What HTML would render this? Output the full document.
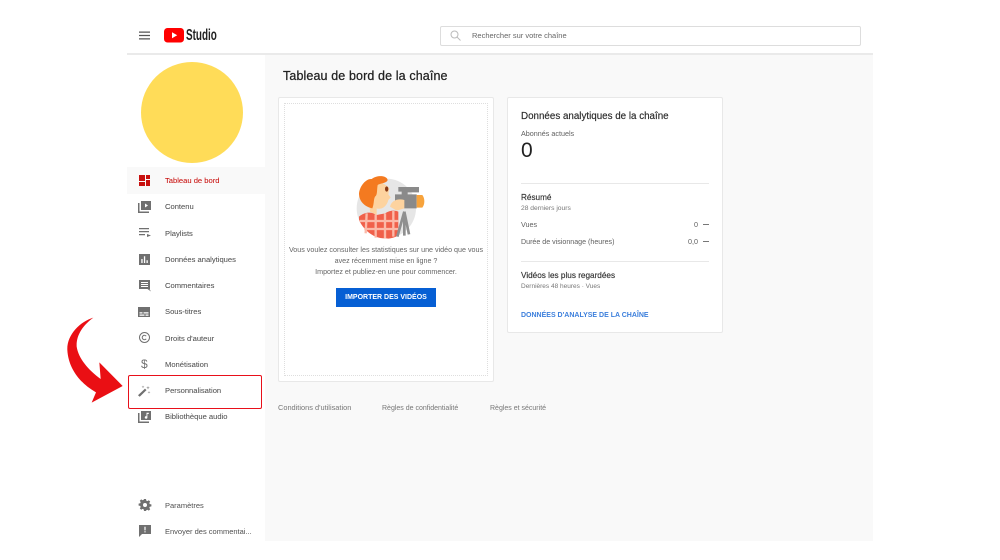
<!DOCTYPE html>
<html lang="fr">
<head>
<meta charset="utf-8">
<title>Studio</title>
<style>
html,body{margin:0;padding:0;background:#fff}
#p{position:relative;width:1000px;height:560px;overflow:hidden;background:#fff;font-family:"Liberation Sans",sans-serif;color:#333;filter:blur(.25px)}
#p div,#p span{position:absolute;white-space:nowrap}
#p svg{position:absolute;overflow:visible}
.n{left:165px;font-size:7.6px;line-height:10px;color:#505050;-webkit-text-stroke:.05px #505050}
.s{font-size:7.2px;line-height:10px;color:#606060}
.f{top:404px;font-size:7.2px;line-height:10px;color:#777}
.i{fill:#707070}
</style>
</head>
<body>
<div id="p">
<div style="left:265px;top:53px;width:608px;height:488px;background:#f9f9f9"></div>
<div style="left:127px;top:53px;width:746px;height:2px;background:#eaeaea"></div>
<svg style="left:139px;top:31px" width="11" height="9"><path d="M0 .5h11v1.200H0zM0 3.900h11v1.200H0zM0 7.300h11v1.200H0z" fill="#555"/></svg>
<svg style="left:164px;top:28px" width="20" height="15"><rect width="20" height="14.500" rx="3.500" fill="#f00"/><path d="M8 4.300l5.200 3-5.200 3z" fill="#fff"/></svg>
<div style="left:186px;top:27px;font-size:15.500px;line-height:18px;font-weight:bold;color:#222;transform:scaleX(.64);transform-origin:left">Studio</div>
<div style="left:440px;top:26px;width:419px;height:18px;border:1px solid #ddd;border-radius:2px;background:#fff"></div>
<svg style="left:450px;top:30px" width="11" height="11"><circle cx="4.500" cy="4.500" r="3.500" fill="none" stroke="#bbb"/><path d="M7 7l3.500 3.500" stroke="#bbb"/></svg>
<div style="left:472px;top:31px;font-size:7.500px;line-height:10px;color:#666">Rechercher sur votre chaîne</div>
<div style="left:141px;top:62px;width:102px;height:101px;border-radius:50%;background:#ffdc58"></div>
<div style="left:127px;top:167px;width:138px;height:27px;background:#f9f9f9"></div>
<svg style="left:139px;top:175px" width="11" height="11"><path d="M0 0h6v6H0zM7 0h4v4H7zM7 5h4v6H7zM0 7h6v4H0z" fill="#c8100e"/></svg>
<div class="n" style="top:175.500px;color:#c8100e;-webkit-text-stroke-color:#c8100e">Tableau de bord</div>
<svg style="left:138px;top:201px" width="13" height="12"><path class="i" d="M3 0h10v9H3zM0 2h1.500v8.500H11V12H0z"/><path d="M7 2.500l3 2-3 2z" fill="#fff"/></svg>
<div class="n" style="top:202px">Contenu</div>
<svg style="left:139px;top:228px" width="12" height="10"><path class="i" d="M0 0h10v1.300H0zM0 3h10v1.300H0zM0 6h6v1.300H0zM8 6l4 1.500-4 1.500z"/></svg>
<div class="n" style="top:229px">Playlists</div>
<svg style="left:139px;top:254px" width="11" height="11"><path class="i" d="M0 0h11v11H0z"/><path d="M2.300 5h1.300v4H2.300zM4.900 2.200h1.300V9H4.900zM7.500 6.300h1.300V9H7.500z" fill="#fff"/></svg>
<div class="n" style="top:255px">Données analytiques</div>
<svg style="left:139px;top:280px" width="12" height="12"><path class="i" d="M0 0h11v9h-.5l1.500 2.500L8.500 9H0z"/><path d="M2 2h7v1H2zM2 4h7v1H2zM2 6h7v1H2z" fill="#fff"/></svg>
<div class="n" style="top:281px">Commentaires</div>
<svg style="left:138px;top:307px" width="13" height="10"><path class="i" d="M0 0h12v10H0z"/><path d="M1.500 5.200h3v1.300h-3zM5.500 5.200h5v1.300h-5zM1.500 7.500h5v1.300h-5zM7.500 7.500h3v1.300h-3z" fill="#fff"/></svg>
<div class="n" style="top:307px">Sous-titres</div>
<svg style="left:139px;top:332px" width="12" height="12"><circle cx="5.500" cy="5.500" r="5" fill="none" stroke="#707070"/><path d="M7.200 4.200a2.200 2.200 0 1 0 0 2.600" fill="none" stroke="#707070"/></svg>
<div class="n" style="top:333.500px">Droits d'auteur</div>
<div style="left:141px;top:357px;font-size:12px;line-height:14px;color:#707070">$</div>
<div class="n" style="top:359.500px">Monétisation</div>
<svg style="left:138px;top:385px" width="13" height="12"><path class="i" d="M0 10.300L7 3.600l1.500 1.500-6.800 6.700z"/><path d="M10 1l.5 1.200 1.200.5-1.200.5-.5 1.200-.5-1.200-1.200-.5 1.200-.5zM5 .5l.4 1 1 .4-1 .4-.4 1-.4-1-1-.4 1-.4zM11 6l.4 1 1 .4-1 .4-.4 1-.4-1-1-.4 1-.4z" fill="#999"/></svg>
<div class="n" style="top:386px">Personnalisation</div>
<svg style="left:138px;top:411px" width="13" height="12"><path class="i" d="M3 0h10v9H3zM0 2h1.500v8.500H11V12H0z"/><path d="M8.500 1.800h2.300v1.200H9.400v3.400a1.300 1.300 0 1 1-.9-1.200z" fill="#fff"/></svg>
<div class="n" style="top:412px">Bibliothèque audio</div>
<svg style="left:139px;top:499px" width="12" height="12"><path class="i" d="M5 0h2l.3 1.600 1.100.5L9.800 1.200l1.400 1.400-.9 1.400.5 1.100 1.600.3v2l-1.600.3-.5 1.100.9 1.400-1.400 1.400-1.400-.9-1.100.5L7 12H5l-.3-1.600-1.100-.5-1.400.9L.8 9.400l.9-1.400-.5-1.100L-.4 6.600v-2l1.600-.3.5-1.100-.9-1.400L2.200.4l1.400.9 1.100-.5z"/><circle cx="6" cy="6" r="2" fill="#fff"/></svg>
<div class="n" style="top:501px;font-size:7.500px;-webkit-text-stroke:0">Paramètres</div>
<svg style="left:139px;top:525px" width="12" height="12"><path class="i" d="M0 0h12v9H3l-3 3z"/><path d="M5.400 1.800h1.200v3.600H5.400zM5.400 6.200h1.200v1.200H5.400z" fill="#fff"/></svg>
<div class="n" style="top:527px;font-size:7.500px;-webkit-text-stroke:0">Envoyer des commentai...</div>
<div style="left:128px;top:375px;width:132px;height:32px;border:1.300px solid #e8101a;border-radius:2px"></div>
<svg style="left:60px;top:305px" width="210" height="125" viewBox="0 0 630 375"><path d="M100 38C60 50 20 90 22 135C25 190 60 235 108 262L95 293L188 243L118 172L122 222C85 195 55 160 50 125C48 90 70 60 100 38Z" fill="#ea0f14"/></svg>
<div style="left:283px;top:67.500px;font-size:12.500px;line-height:16px;color:#222;letter-spacing:.12px;-webkit-text-stroke:.25px #222">Tableau de bord de la chaîne</div>
<div style="left:278px;top:97px;width:214px;height:283px;background:#fff;border:1px solid #e8e8e8;border-radius:2px"></div>
<div style="left:284px;top:103px;width:202px;height:271px;border:1px dotted #dedede"></div>
<svg style="left:335px;top:165px" width="110" height="80" viewBox="0 0 330 240">
<circle cx="154" cy="130" r="89" fill="#e6e6e6"/>
<path d="M72 155C90 140 110 140 125 150L150 145C165 135 180 135 190 140V212C172 220 162 222 154 220C120 222 88 200 72 165Z" fill="#f0604a"/>
<path d="M95 145L92 205M122 148V218M150 145V220M175 138V215M74 168H190M88 192H190" stroke="#fbb9a8" stroke-width="7" fill="none"/>
<path d="M100 60C130 40 155 60 163 70L160 88L167 97L160 105C155 125 140 135 125 130L125 150L105 140Z" fill="#fdd39f"/>
<path d="M72 85C75 60 95 40 110 42C125 30 155 30 158 45C155 55 135 55 128 60C125 75 128 90 120 95C115 105 118 115 112 130C90 125 72 110 72 85Z" fill="#f47a20"/>
<ellipse cx="155" cy="72" rx="5" ry="8" fill="#8a3a15"/>
<path d="M208 140L187 215M208 140V212M208 140L222 208" stroke="#8f8f8f" stroke-width="8" fill="none"/>
<path d="M190 66H252V82H218V88H245V130H180V88H200V80H190Z" fill="#8a8a8a"/>
<path d="M245 90H262C270 100 270 118 262 128H245Z" fill="#f7a33c"/>
<path d="M165 125C170 105 190 100 208 105V130L185 137Z" fill="#fdd39f"/>
</svg>
<div style="left:279px;top:245px;width:214px;text-align:center;font-size:7.150px;line-height:11px;color:#666">Vous voulez consulter les statistiques sur une vidéo que vous<br>avez récemment mise en ligne ?<br>Importez et publiez-en une pour commencer.</div>
<div style="left:336px;top:288px;width:100px;height:19px;background:#065fd4;color:#fff;font-size:7px;font-weight:bold;line-height:19px;text-align:center">IMPORTER DES VIDÉOS</div>
<div style="left:507px;top:97px;width:214px;height:234px;background:#fff;border:1px solid #e8e8e8;border-radius:2px"></div>
<div style="left:521px;top:110px;font-size:9.800px;line-height:13px;color:#2a2a2a;-webkit-text-stroke:.15px #2a2a2a">Données analytiques de la chaîne</div>
<div class="s" style="left:521px;top:129px">Abonnés actuels</div>
<div style="left:521px;top:139px;font-size:21px;line-height:23px;color:#222">0</div>
<div style="left:521px;top:183px;width:188px;height:1px;background:#e8e8e8"></div>
<div style="left:521px;top:192px;font-size:8.200px;line-height:11px;color:#333;-webkit-text-stroke:.15px #333">Résumé</div>
<div class="s" style="left:521px;top:204px;font-size:6.700px;color:#777">28 derniers jours</div>
<div class="s" style="left:521px;top:220px">Vues</div>
<div class="s" style="left:694px;top:220px">0</div>
<div style="left:703px;top:224px;width:6px;height:1px;background:#777"></div>
<div class="s" style="left:521px;top:237px;font-size:7.100px">Durée de visionnage (heures)</div>
<div class="s" style="left:688px;top:237px">0,0</div>
<div style="left:703px;top:241px;width:6px;height:1px;background:#777"></div>
<div style="left:521px;top:261px;width:188px;height:1px;background:#e8e8e8"></div>
<div style="left:521px;top:270px;font-size:8.200px;line-height:11px;color:#333;-webkit-text-stroke:.15px #333">Vidéos les plus regardées</div>
<div class="s" style="left:521px;top:282px;font-size:6.500px;color:#777">Dernières 48 heures · Vues</div>
<div style="left:521px;top:311px;font-size:7px;line-height:10px;font-weight:bold;color:#3c7fdc">DONNÉES D'ANALYSE DE LA CHAÎNE</div>
<div class="f" style="left:278px;top:402.500px;font-size:7.400px">Conditions d'utilisation</div>
<div class="f" style="left:382px;font-size:7px">Règles de confidentialité</div>
<div class="f" style="left:490px;font-size:7px">Règles et sécurité</div>
</div>
</body>
</html>
